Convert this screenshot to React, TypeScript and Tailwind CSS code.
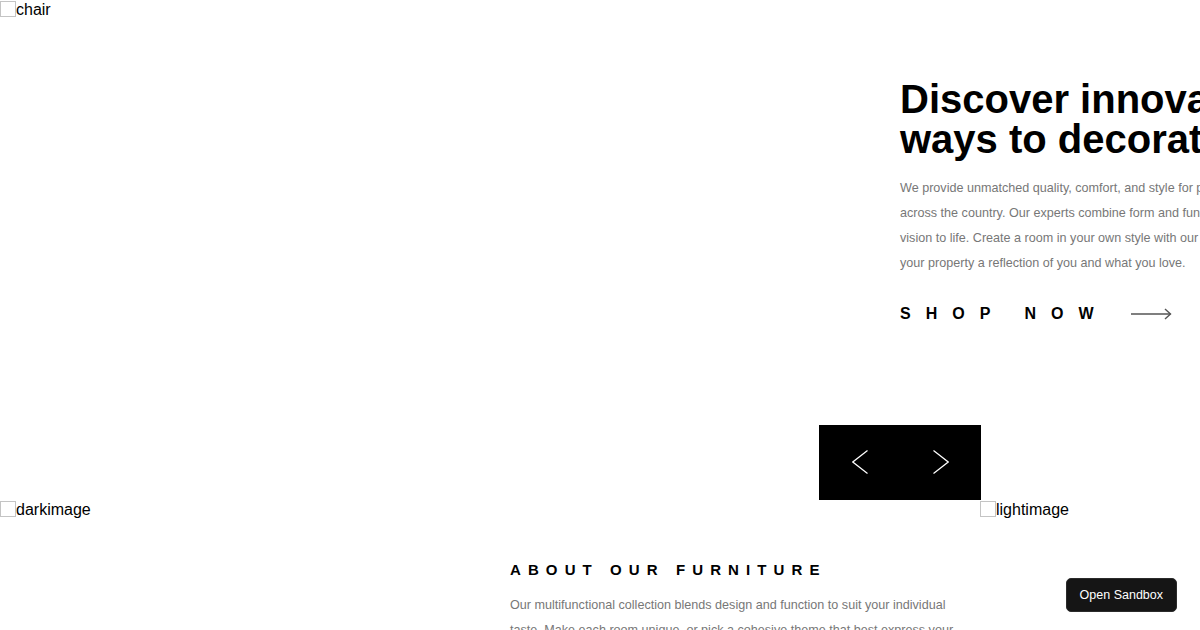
import React from 'react';

const BrokenImg: React.FC<{ alt: string }> = ({ alt }) => (
  <span className="inline-flex items-start text-[16px] leading-[18px] text-black">
    <span className="w-4 h-4 shrink-0 border border-[#c4c4c4] box-border" />
    {alt}
  </span>
);

const Chevron: React.FC<{ dir: 'left' | 'right' }> = ({ dir }) => (
  <svg width="16" height="24" viewBox="0 0 16 24" fill="none">
    <path
      d={dir === 'left' ? 'M15.5 0.5 L0.8 12 L15.5 23.5' : 'M0.5 0.5 L15.2 12 L0.5 23.5'}
      stroke="white"
      strokeWidth="1.2"
    />
  </svg>
);

const App: React.FC = () => {
  return (
    <div className="relative w-[1200px] h-[630px] overflow-hidden bg-white font-['Liberation_Sans',Arial,sans-serif]">
      {/* Hero */}
      <section className="flex h-[500px]">
        <div className="w-[819px] shrink-0">
          <BrokenImg alt="chair" />
        </div>

        <div className="w-[600px] shrink-0 flex flex-col justify-between">
          <div className="pl-[81px] pt-[79px]">
            <h1 className="w-[422px] text-[40px] leading-[40px] font-bold text-black">
              Discover innovative ways to decorate
            </h1>
            <p className="w-[422px] mt-[17px] text-[12.6px] leading-[25px] text-[#777]">
              We provide unmatched quality, comfort, and style for property owners across the country.
              Our experts combine form and function in bringing your vision to life. Create a room in your
              own style with our collection and make your property a reflection of you and what you love.
            </p>
            <a href="#" className="mt-[30px] flex items-center">
              <span className="text-[16px] leading-[16px] font-bold tracking-[15px] text-black">SHOP NOW</span>
              <svg className="ml-[22px]" width="41" height="12" viewBox="0 0 41 12" fill="none">
                <path d="M0 6 H39.5" stroke="#555" strokeWidth="1.4" />
                <path d="M34 1 L39.5 6 L34 11" stroke="#555" strokeWidth="1.4" />
              </svg>
            </a>
          </div>

          <div className="w-[162px] h-[75px] pb-[2px] bg-black flex">
            <button className="w-1/2 flex items-center justify-center">
              <Chevron dir="left" />
            </button>
            <button className="w-1/2 flex items-center justify-center">
              <Chevron dir="right" />
            </button>
          </div>
        </div>
      </section>

      {/* About */}
      <section className="flex h-[130px]">
        <div className="w-[480px] shrink-0">
          <BrokenImg alt="darkimage" />
        </div>
        <div className="w-[500px] shrink-0 pl-[30px] pt-[62px]">
          <h2 className="text-[15px] leading-[15px] font-bold tracking-[7.1px] text-black">
            ABOUT OUR FURNITURE
          </h2>
          <p className="w-[455px] mt-[16px] text-[12.6px] leading-[25px] text-[#777]">
            Our multifunctional collection blends design and function to suit your individual taste.
            Make each room unique, or pick a cohesive theme that best express your interests and what
            inspires you. Find the furniture pieces you need, from traditional to contemporary styles
            or anything in between. Product specialists are available to help you create your dream space.
          </p>
        </div>
        <div className="flex-1">
          <BrokenImg alt="lightimage" />
        </div>
      </section>

      <button className="absolute right-[23px] bottom-[18px] h-[34px] px-[13px] rounded-[5px] bg-[#151515] border border-[#2b2b2b] text-white text-[12.5px] font-['Liberation_Sans',Arial,sans-serif]">
        Open Sandbox
      </button>
    </div>
  );
};

export default App;
